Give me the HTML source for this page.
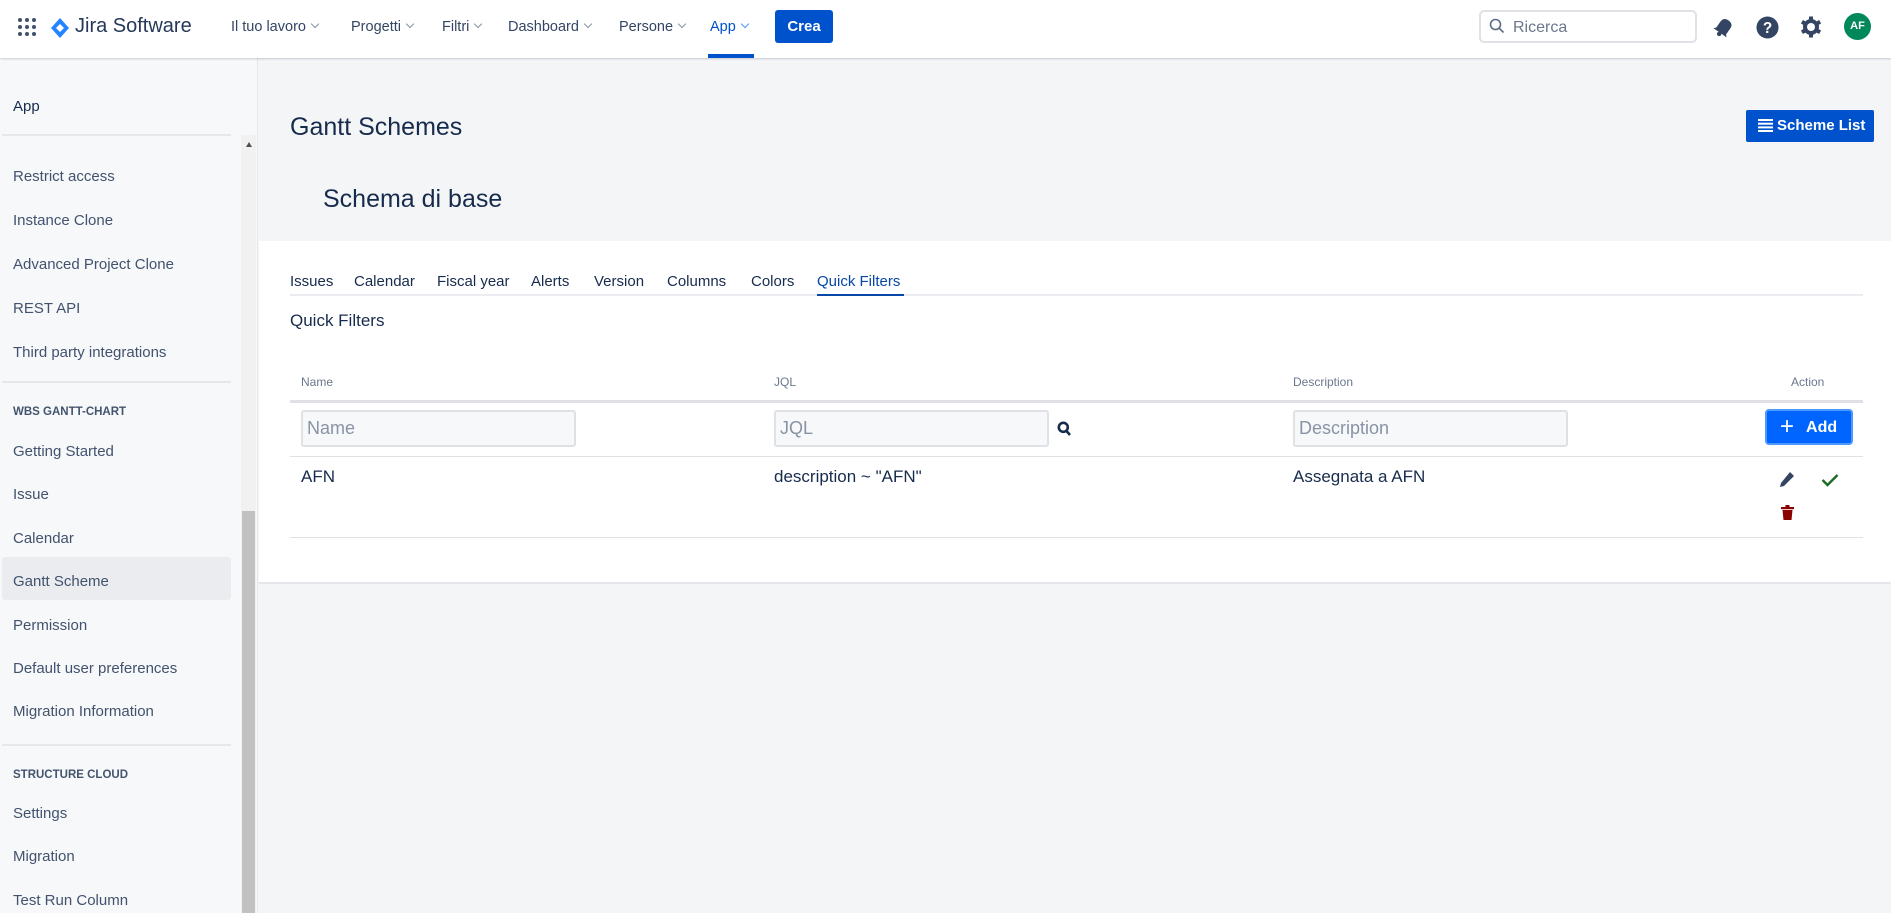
<!DOCTYPE html>
<html><head><meta charset="utf-8">
<style>
*{box-sizing:border-box;margin:0;padding:0}
body{width:1891px;height:913px;overflow:hidden;background:#f4f5f7;font-family:"Liberation Sans",sans-serif;color:#172b4d;position:relative}
.a{position:absolute;white-space:nowrap}
#hdr{position:absolute;left:0;top:0;width:1891px;height:58px;background:#fff;box-shadow:0 1px 2px rgba(9,30,66,.2);z-index:2}
.nav{font-size:14.5px;color:#344563;top:19px}
.chev{display:inline-block;width:6px;height:6px;border-right:1.5px solid #8993a4;border-bottom:1.5px solid #8993a4;transform:rotate(45deg);margin-left:6px;position:relative;top:-4px}
#side{position:absolute;left:0;top:58px;width:258px;height:855px;background:#f7f8f9;border-right:1px solid #e6e7ea}
.si{font-size:15px;color:#42526e;left:13px}
.sh{font-size:11.5px;font-weight:bold;color:#44546f;left:13px}
.sep{position:absolute;left:2px;width:229px;height:2px;background:#e6e7ea}
.tab{font-size:15px;color:#172b4d;top:273px}
.th{font-size:12px;color:#6b778c;top:375px}
.inp{position:absolute;height:37px;background:#f7f8fa;border:2px solid #dfe1e6;border-radius:3px;font-size:18px;color:#8993a4;padding:6px 4px}
.td{font-size:17px;color:#172b4d;top:467px}
</style></head><body>
<div id="hdr">
 <svg class="a" style="left:17px;top:17px" width="20" height="20" viewBox="0 0 20 20" fill="#42526e">
  <circle cx="3" cy="3" r="2"/><circle cx="10" cy="3" r="2"/><circle cx="17" cy="3" r="2"/>
  <circle cx="3" cy="10" r="2"/><circle cx="10" cy="10" r="2"/><circle cx="17" cy="10" r="2"/>
  <circle cx="3" cy="17" r="2"/><circle cx="10" cy="17" r="2"/><circle cx="17" cy="17" r="2"/></svg>
 <svg class="a" style="left:50px;top:17px" width="20" height="22" viewBox="0 0 20 22"><path d="M10 1 L19 11 L10 21 L1 11Z" fill="#2684ff"/><path d="M10 7 L14 11 L10 15 L6 11Z" fill="#fff"/></svg>
 <div class="a" style="left:75px;top:15px;font-size:20px;color:#253858">Jira Software</div>
 <div class="a nav" style="left:231px">Il tuo lavoro<span class="chev"></span></div>
 <div class="a nav" style="left:351px">Progetti<span class="chev"></span></div>
 <div class="a nav" style="left:442px">Filtri<span class="chev"></span></div>
 <div class="a nav" style="left:508px">Dashboard<span class="chev"></span></div>
 <div class="a nav" style="left:619px">Persone<span class="chev"></span></div>
 <div class="a nav" style="left:710px;color:#0052cc">App<span class="chev" style="border-color:#4c9aff"></span></div>
 <div class="a" style="left:708px;top:54px;width:46px;height:4px;background:#0052cc"></div>
 <div class="a" style="left:775px;top:10px;width:58px;height:33px;background:#0052cc;border-radius:3px;color:#fff;font-size:15px;font-weight:bold;text-align:center;line-height:33px">Crea</div>
 <div class="a" style="left:1479px;top:10px;width:218px;height:33px;border:2px solid #dfe1e6;border-radius:5px;background:#fff"></div>
 <svg class="a" style="left:1489px;top:18px" width="16" height="16" viewBox="0 0 16 16" fill="none" stroke="#5e6c84" stroke-width="1.6"><circle cx="6.5" cy="6.5" r="5"/><path d="M10 10 L14.5 14.5"/></svg>
 <div class="a" style="left:1513px;top:19px;font-size:16px;color:#6b778c">Ricerca</div>
 <svg class="a" style="left:1712px;top:15px" width="24" height="24" viewBox="0 0 24 24" fill="#344563"><g transform="rotate(35 12 12)"><path d="M6 17 L6 10 Q6 4 12 4 Q18 4 18 10 L18 17 L20 19 L4 19 Z"/><circle cx="12" cy="20.5" r="2.2"/></g></svg>
 <svg class="a" style="left:1756px;top:16px" width="23" height="23" viewBox="0 0 24 24"><circle cx="12" cy="12" r="11.5" fill="#344563"/><text x="12" y="17.5" font-size="16" font-weight="bold" text-anchor="middle" fill="#fff" font-family="Liberation Sans">?</text></svg>
 <svg class="a" style="left:1799px;top:15px" width="24" height="24" viewBox="0 0 24 24"><g fill="#344563"><circle cx="12" cy="12" r="8"/><rect x="10" y="1.5" width="4" height="21"/><rect x="10" y="1.5" width="4" height="21" transform="rotate(60 12 12)"/><rect x="10" y="1.5" width="4" height="21" transform="rotate(120 12 12)"/></g><circle cx="12" cy="12" r="4" fill="#fff"/></svg>
 <div class="a" style="left:1844px;top:13px;width:27px;height:27px;border-radius:50%;background:#00875a;color:#fff;font-size:11px;font-weight:bold;text-align:center;line-height:27px">AF</div>
</div>

<div id="side">
 <div class="a si" style="top:40px;color:#172b4d">App</div>
 <div class="sep" style="top:76px"></div>
 <div class="a" style="left:241px;top:77px;width:15px;height:778px;background:#f1f1f1"></div>
 <div class="a" style="left:246px;top:84px;width:0;height:0;border-left:3px solid transparent;border-right:3px solid transparent;border-bottom:5px solid #505050"></div>
 <div class="a" style="left:242px;top:453px;width:13px;height:402px;background:#c1c1c1"></div>
 <div class="a si" style="top:110px">Restrict access</div>
 <div class="a si" style="top:154px">Instance Clone</div>
 <div class="a si" style="top:198px">Advanced Project Clone</div>
 <div class="a si" style="top:242px">REST API</div>
 <div class="a si" style="top:286px">Third party integrations</div>
 <div class="sep" style="top:323px"></div>
 <div class="a sh" style="top:348px">WBS GANTT-CHART</div>
 <div class="a si" style="top:385px">Getting Started</div>
 <div class="a si" style="top:428px">Issue</div>
 <div class="a si" style="top:472px">Calendar</div>
 <div class="a" style="left:2px;top:499px;width:229px;height:43px;background:#ebecf0;border-radius:3px"></div>
 <div class="a si" style="top:515px">Gantt Scheme</div>
 <div class="a si" style="top:559px">Permission</div>
 <div class="a si" style="top:602px">Default user preferences</div>
 <div class="a si" style="top:645px">Migration Information</div>
 <div class="sep" style="top:686px"></div>
 <div class="a sh" style="top:711px">STRUCTURE CLOUD</div>
 <div class="a si" style="top:747px">Settings</div>
 <div class="a si" style="top:790px">Migration</div>
 <div class="a si" style="top:834px">Test Run Column</div>
</div>

<div class="a" style="left:290px;top:113px;font-size:25px;color:#172b4d">Gantt Schemes</div>
<div class="a" style="left:1746px;top:110px;width:128px;height:32px;background:#0052cc;border-radius:2px;color:#fff;font-size:15px;font-weight:bold;line-height:32px;padding-left:12px">
 <svg style="vertical-align:-2px;margin-right:4px" width="15" height="13" viewBox="0 0 15 13" fill="#fff"><rect y="0" width="15" height="2"/><rect y="3.7" width="15" height="2"/><rect y="7.4" width="15" height="2"/><rect y="11" width="15" height="2"/></svg>Scheme List</div>
<div class="a" style="left:323px;top:185px;font-size:25px;color:#172b4d">Schema di base</div>

<div class="a" style="left:259px;top:241px;width:1632px;height:343px;background:#fff;border-bottom:2px solid #e4e6ea"></div>
<div class="a tab" style="left:290px">Issues</div>
<div class="a tab" style="left:354px">Calendar</div>
<div class="a tab" style="left:437px">Fiscal year</div>
<div class="a tab" style="left:531px">Alerts</div>
<div class="a tab" style="left:594px">Version</div>
<div class="a tab" style="left:667px">Columns</div>
<div class="a tab" style="left:751px">Colors</div>
<div class="a tab" style="left:817px;color:#0747a6">Quick Filters</div>
<div class="a" style="left:290px;top:294px;width:1573px;height:2px;background:#ebecf0"></div>
<div class="a" style="left:817px;top:294px;width:87px;height:2px;background:#0747a6"></div>
<div class="a" style="left:290px;top:311px;font-size:17px;color:#172b4d">Quick Filters</div>

<div class="a th" style="left:301px">Name</div>
<div class="a th" style="left:774px">JQL</div>
<div class="a th" style="left:1293px">Description</div>
<div class="a th" style="left:1791px">Action</div>
<div class="a" style="left:290px;top:400px;width:1573px;height:3px;background:#dfe1e6"></div>
<div class="inp" style="left:301px;top:410px;width:275px">Name</div>
<div class="inp" style="left:774px;top:410px;width:275px">JQL</div>
<svg class="a" style="left:1057px;top:421px" width="15" height="16" viewBox="0 0 15 16" fill="none" stroke="#172b4d" stroke-width="2.6"><circle cx="6.3" cy="6.3" r="4.5"/><path d="M9.5 10 L13 14"/></svg>
<div class="inp" style="left:1293px;top:410px;width:275px">Description</div>
<div class="a" style="left:1765px;top:409px;width:88px;height:36px;background:#0065ff;border:2px solid #4c9aff;border-radius:4px;color:#fff;font-size:16px;font-weight:bold;line-height:32px;padding-left:13px"><span style="font-size:24px;font-weight:normal;vertical-align:-2px;margin-right:12px">+</span>Add</div>
<div class="a" style="left:290px;top:456px;width:1573px;height:1px;background:#dfe1e6"></div>
<div class="a td" style="left:301px">AFN</div>
<div class="a td" style="left:774px">description ~ "AFN"</div>
<div class="a td" style="left:1293px">Assegnata a AFN</div>
<svg class="a" style="left:1779px;top:471px" width="16" height="17" viewBox="0 0 16 17"><path d="M11 1 L15 5 L5 15 L1 16 L2 12Z" fill="#344563"/></svg>
<svg class="a" style="left:1821px;top:473px" width="18" height="14" viewBox="0 0 18 14"><path d="M1.5 7 L6.5 12 L16.5 2" fill="none" stroke="#1e6b26" stroke-width="2.4"/></svg>
<svg class="a" style="left:1781px;top:505px" width="13" height="15" viewBox="0 0 13 15" fill="#8b0000"><rect x="0" y="2" width="13" height="2.2"/><rect x="4.5" y="0" width="4" height="2.5"/><path d="M1.5 5 L11.5 5 L10.5 15 L2.5 15Z"/></svg>
<div class="a" style="left:290px;top:537px;width:1573px;height:1px;background:#dfe1e6"></div>
</body></html>
